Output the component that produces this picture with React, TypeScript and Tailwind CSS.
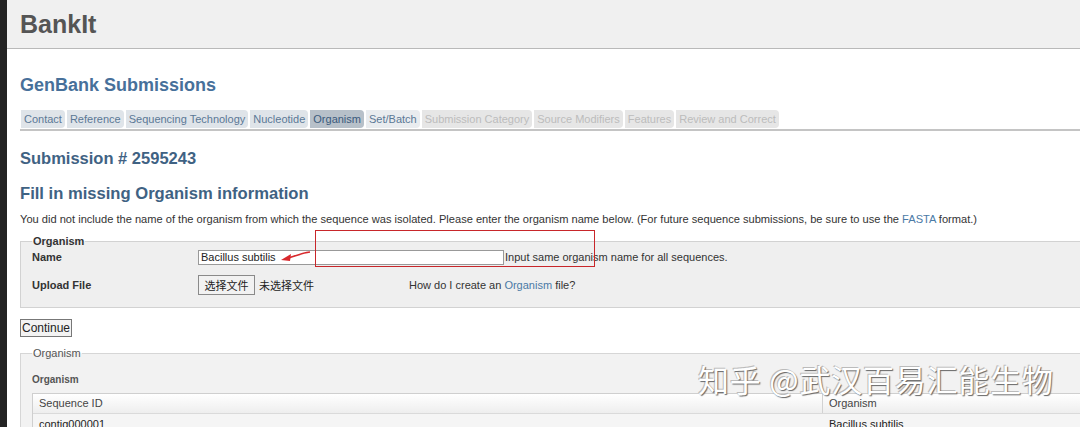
import React from 'react'

const tabs = [
  { label: 'Contact', state: 'done' },
  { label: 'Reference', state: 'done' },
  { label: 'Sequencing Technology', state: 'done' },
  { label: 'Nucleotide', state: 'done' },
  { label: 'Organism', state: 'current' },
  { label: 'Set/Batch', state: 'next' },
  { label: 'Submission Category', state: 'off' },
  { label: 'Source Modifiers', state: 'off' },
  { label: 'Features', state: 'off' },
  { label: 'Review and Correct', state: 'off' },
]

function Tab({ label, state }: { label: string; state: string }) {
  let cls = 'bg-[#dfe4e9] text-[#5b7896]'
  if (state === 'current') cls = 'bg-[#b7c0c9] text-[#3a5a7c]'
  if (state === 'next') cls = 'bg-[#e9ecef] text-[#5b7896]'
  if (state === 'off') cls = 'bg-[#e6e6e6] text-[#bcbcbc]'
  return (
    <div className={`h-[18px] px-[3px] mr-[2px] flex items-center rounded-r-[4px] text-[11px] leading-none ${cls}`}>
      {label}
    </div>
  )
}

export default function App() {
  return (
    <div className="flex w-[1080px] h-[427px] overflow-hidden bg-white font-['Liberation_Sans',Arial,sans-serif] text-[#222]">
      {/* dark edge */}
      <div className="w-[7px] shrink-0 bg-[#232323]" />

      <div className="relative flex-1 min-w-0">
        {/* header */}
        <div className="h-[49px] bg-[#f0f0f0] border-b border-[#b9b9b9] pl-[13px] pt-[9px]">
          <span className="text-[25px] font-bold text-[#555] leading-[30px]">BankIt</span>
        </div>

        <div className="pl-[13px]">
          <h1 className="mt-[24px] text-[18px] font-bold text-[#47709a] leading-[24px]">GenBank Submissions</h1>

          {/* steps */}
          <div className="mt-[13px] flex border-b-2 border-[#c4c4c4] pb-[1px] pl-px">
            {tabs.map((t) => (
              <Tab key={t.label} label={t.label} state={t.state} />
            ))}
          </div>

          <h2 className="mt-[17px] text-[16.5px] font-bold text-[#3f6283] leading-[20px]">Submission # 2595243</h2>
          <h2 className="mt-[16px] text-[16.6px] font-bold text-[#3f6283] leading-[20px]">Fill in missing Organism information</h2>

          <p className="mt-[8px] text-[11.1px] leading-[14px] text-[#333] whitespace-nowrap">
            You did not include the name of the organism from which the sequence was isolated. Please enter the organism
            name below. (For future sequence submissions, be sure to use the{' '}
            <span className="text-[#4b7aa6]">FASTA</span> format.)
          </p>

          {/* organism form */}
          <fieldset className="mt-[9px] w-[1120px] bg-[#efefef] border border-[#d2d2d2] pl-[11px] pb-[12px]">
            <legend className="text-[11px] font-bold text-[#333] leading-[12px] px-px">Organism</legend>
            <div className="flex items-center h-[16px] mt-[2px]">
              <div className="w-[166px] text-[11px] font-bold text-[#333]">Name</div>
              <div className="w-[306px] h-[15px] bg-white border border-[#999] text-[11px] leading-[13px] pl-[2px] text-[#222]">
                Bacillus subtilis
              </div>
              <span className="text-[11px] text-[#333] ml-px">Input same organism name for all sequences.</span>
            </div>
            <div className="flex items-center mt-[10px] h-[20px]">
              <div className="w-[166px] text-[11px] font-bold text-[#333]">Upload File</div>
              <button className="h-[20px] w-[57px] bg-[#f2f2f2] border border-[#8a8a8a] text-[11px] text-[#222] leading-none font-['Noto_Sans_CJK_SC',sans-serif]">
                选择文件
              </button>
              <span className="ml-[4px] text-[11px] text-[#222] font-['Noto_Sans_CJK_SC',sans-serif]">未选择文件</span>
              <span className="ml-[95px] text-[11px] text-[#333]">
                How do I create an <span className="text-[#4b7aa6]">Organism</span> file?
              </span>
            </div>
          </fieldset>

          <button className="mt-[11px] h-[18px] px-[1px] border border-[#777] bg-[#f3f3f3] text-[12px] leading-none text-[#222]">
            Continue
          </button>

          {/* summary */}
          <fieldset className="mt-[8px] w-[1120px] bg-[#f2f2f2] border border-[#d6d6d6] pl-[11px]">
            <legend className="text-[11px] text-[#555] leading-[12px] px-px">Organism</legend>
            <div className="mt-[13px] text-[10px] font-bold text-[#555]">Organism</div>
            <div className="mt-[6px] border border-[#cfcfcf] bg-white">
              <div className="flex h-[20px] items-center bg-gradient-to-b from-white to-[#eeeeee] border-b border-[#dadada] text-[11px] text-[#444]">
                <div className="w-[790px] pl-[6px] h-full flex items-center border-r border-[#d2d2d2]">Sequence ID</div>
                <div className="pl-[6px]">Organism</div>
              </div>
              <div className="flex h-[20px] items-center bg-[#f5f5f5] text-[11px] text-[#222]">
                <div className="w-[790px] pl-[6px]">contig000001</div>
                <div className="pl-[6px]">Bacillus subtilis</div>
              </div>
            </div>
          </fieldset>
        </div>

        {/* red annotation box */}
        <div className="absolute left-[308px] top-[230px] w-[280px] h-[37px] border-[1.5px] border-[#c8262a]" />
        <svg className="absolute left-[270px] top-[250px]" width="36" height="14" viewBox="0 0 36 14">
          <path d="M33 2 C25 3 18 6 12 8" stroke="#d8282c" strokeWidth="1.6" fill="none" />
          <path d="M4 10 L14 4 L13 11 Z" fill="#d8282c" />
        </svg>

        {/* watermark */}
        <div className="absolute left-[691px] top-[361px] text-[31px] tracking-[0.8px] leading-[36px] text-white whitespace-nowrap font-['Noto_Sans_CJK_SC',sans-serif] [text-shadow:1px_1px_1px_#666,-1px_-1px_0_#bbb]">
          知乎 @武汉百易汇能生物
        </div>
      </div>
    </div>
  )
}
